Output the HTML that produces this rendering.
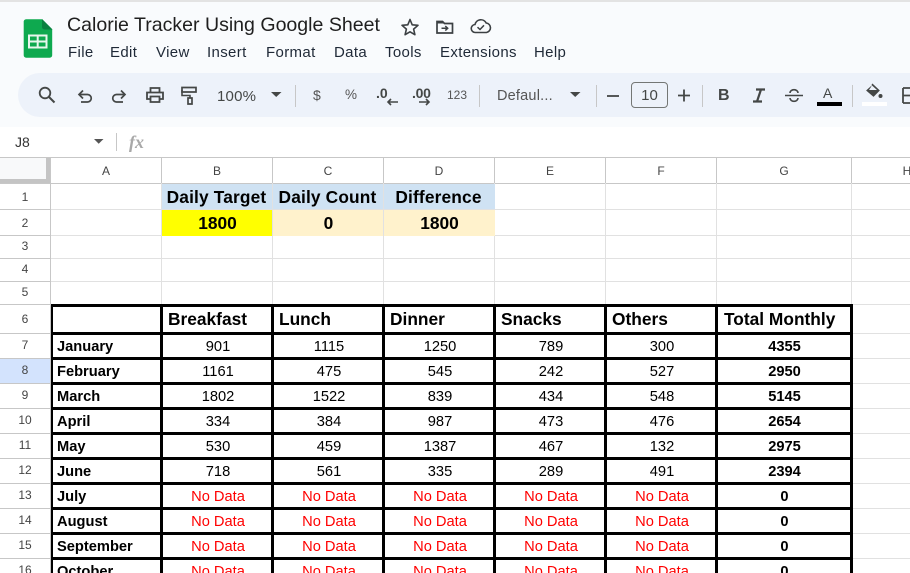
<!DOCTYPE html>
<html><head><meta charset="utf-8"><title>Calorie Tracker Using Google Sheet</title>
<style>
html,body{margin:0;padding:0;height:573px;overflow:hidden}
body{width:910px;height:573px;overflow:hidden;position:relative;background:#fff;font-family:"Liberation Sans",Arial,sans-serif;color:#000}
div{position:absolute;box-sizing:border-box}
span.t{position:absolute;white-space:nowrap;line-height:20px}
.m{top:43px;font-size:15px;color:#1f2937;letter-spacing:.35px;line-height:20px;white-space:nowrap}
.hl{background:#e1e1e1}
.hh{background:#c7c7c7}
.ch,.rh{font-size:12px;color:#444;text-align:center;line-height:20px}
.ch{top:161px;width:100px}
.rh{left:0;width:50px}
.b{background:#000}
.c{font-size:14.67px;text-align:center;line-height:20px;white-space:nowrap;margin-top:1px}
.l{font-size:14.67px;font-weight:bold;left:57px;line-height:20px;white-space:nowrap;margin-top:1px}
.h{font-size:17.33px;font-weight:bold;line-height:24px;white-space:nowrap}
.w{letter-spacing:.15px}
.B{left:163px;width:110px}.C{left:274px;width:110px}.D{left:385px;width:110px}.E{left:496px;width:110px}.F{left:607px;width:110px}.G{left:718px;width:133px;font-weight:bold}
.n{color:#f00}
.s{background:#c7c7c7;width:1px;top:85px;height:22px}
svg{position:absolute;overflow:visible}
</style></head><body>
<div style="left:0;top:0;width:910px;height:127px;background:#f9fbfd"></div>
<div style="left:0;top:0;width:910px;height:2px;background:#e3e3e3"></div>

<svg style="left:23px;top:19px" width="30" height="39" viewBox="0 0 30 39"><path d="M3 0H19L29 10V36a2.500 2.500 0 0 1-2.500 2.500H3A2.500 2.500 0 0 1 .5 36V3A2.500 2.500 0 0 1 3 0Z" fill="#0ea94f" transform="translate(.2 .2)"/><path d="M19 0L29.500 10.500H21.500a2.500 2.500 0 0 1-2.500-2.500Z" fill="#0a8040"/><path d="M6 16.500H23.500V28.500H6Z" fill="none" stroke="#e8f6ee" stroke-width="2"/><path d="M6 22.500H23.500M14.700 16.500V28.500" stroke="#e8f6ee" stroke-width="2"/></svg>

<span class="t" style="left:67px;top:15px;font-size:19.560px;color:#1f1f1f;line-height:20px">Calorie Tracker Using Google Sheet</span>
<svg style="left:400px;top:17px" width="20" height="20" viewBox="0 0 20 20"><path d="M10 2.500L12.200 7.800L18 8.300L13.600 12.100L14.900 17.700L10 14.800L5.100 17.700L6.400 12.100L2 8.300L7.800 7.800Z" fill="none" stroke="#3c4043" stroke-width="1.600" stroke-linejoin="round"/></svg>
<svg style="left:435px;top:17px" width="20" height="20" viewBox="0 0 20 20"><path d="M2 4.500H7.500L9.500 6.500H17.500V16H2Z" fill="none" stroke="#3c4043" stroke-width="1.700"/><path d="M2 4H7.500L9.500 6.500H2Z" fill="#3c4043"/><path d="M6.500 11.300H12.500M10.300 9L12.700 11.300L10.300 13.600" fill="none" stroke="#3c4043" stroke-width="1.500"/></svg>
<svg style="left:470px;top:16px" width="22" height="20" viewBox="0 0 22 20"><path d="M5.500 16.500a4 4 0 0 1-.5-8a6 6 0 0 1 11.200-1.500a4.800 4.800 0 0 1 .3 9.500Z" fill="none" stroke="#3c4043" stroke-width="1.600"/><path d="M7.500 11.200L10 13.500L14 9.300" fill="none" stroke="#3c4043" stroke-width="1.500"/></svg>

<div class="m" style="left:68px">File</div>
<div class="m" style="left:110px">Edit</div>
<div class="m" style="left:156px">View</div>
<div class="m" style="left:207px">Insert</div>
<div class="m" style="left:266px">Format</div>
<div class="m" style="left:334px">Data</div>
<div class="m" style="left:385px">Tools</div>
<div class="m" style="left:440px">Extensions</div>
<div class="m" style="left:534px">Help</div>

<div style="left:18px;top:73px;width:920px;height:44px;border-radius:22px;background:#edf2fa"></div>

<svg style="left:37px;top:85px" width="20" height="20" viewBox="0 0 20 20"><circle cx="8" cy="8" r="5.300" fill="none" stroke="#444746" stroke-width="1.800"/><path d="M12 12L17.500 17.500" stroke="#444746" stroke-width="2"/></svg>
<svg style="left:75px;top:86px" width="20" height="20" viewBox="0 0 20 20"><path d="M4 8.500H12.500a3.500 3.500 0 0 1 0 7.500H6" fill="none" stroke="#444746" stroke-width="1.700"/><path d="M8 4.500L4 8.500L8 12.500" fill="none" stroke="#444746" stroke-width="1.700"/></svg>
<svg style="left:109px;top:86px" width="20" height="20" viewBox="0 0 20 20"><path d="M16 8.500H7.500a3.500 3.500 0 0 0 0 7.500H14" fill="none" stroke="#444746" stroke-width="1.700"/><path d="M12 4.500L16 8.500L12 12.500" fill="none" stroke="#444746" stroke-width="1.700"/></svg>
<svg style="left:145px;top:85px" width="20" height="20" viewBox="0 0 20 20"><path d="M5.500 7V3H14.500V7M5.500 14H2V7.500H18V14H14.500" fill="none" stroke="#444746" stroke-width="1.800"/><path d="M5.500 11.500H14.500V17H5.500Z" fill="none" stroke="#444746" stroke-width="1.800"/></svg>
<svg style="left:180px;top:85px" width="20" height="20" viewBox="0 0 20 20"><path d="M2 2.500H16V7H2Z" fill="none" stroke="#444746" stroke-width="1.700"/><path d="M2 5V10.500H10V13" fill="none" stroke="#444746" stroke-width="1.600"/><path d="M8 13H12V19H8Z" fill="none" stroke="#444746" stroke-width="1.700"/></svg>

<span class="t" style="left:217px;top:87px;font-size:15px;color:#444746;letter-spacing:.2px">100%</span>
<svg style="left:271px;top:92px" width="12" height="6"><path d="M0 0H10.500L5.200 5Z" fill="#444746"/></svg>
<div class="s" style="left:295px"></div>
<span class="t" style="left:313px;top:85px;font-size:14px;color:#555">$</span>
<span class="t" style="left:345px;top:85px;font-size:13.500px;color:#555">%</span>
<span class="t" style="left:376px;top:83px;font-size:14px;font-weight:bold;color:#444746">.0</span>
<svg style="left:386px;top:98px" width="14" height="8"><path d="M12 4H2M5 1L2 4L5 7" fill="none" stroke="#444746" stroke-width="1.600"/></svg>
<span class="t" style="left:412px;top:83px;font-size:14px;font-weight:bold;color:#444746;letter-spacing:-.3px">.00</span>
<svg style="left:418px;top:98px" width="14" height="8"><path d="M1 4H11M8 1L11 4L8 7" fill="none" stroke="#444746" stroke-width="1.600"/></svg>
<span class="t" style="left:447px;top:85px;font-size:12px;color:#555">123</span>
<div class="s" style="left:479px"></div>
<span class="t" style="left:497px;top:86px;font-size:14.500px;color:#555;letter-spacing:.2px">Defaul...</span>
<svg style="left:570px;top:92px" width="12" height="6"><path d="M0 0H10.500L5.200 5Z" fill="#444746"/></svg>
<div class="s" style="left:596px"></div>
<svg style="left:607px;top:95px" width="13" height="2"><path d="M0 1H12" stroke="#444746" stroke-width="1.800"/></svg>
<div style="left:631px;top:82px;width:37px;height:26px;border:1px solid #747775;border-radius:4px;font-size:15px;color:#444746;text-align:center;line-height:25px">10</div>
<svg style="left:678px;top:89px" width="13" height="13"><path d="M0 6.500H12M6 .5V12.500" stroke="#444746" stroke-width="1.800"/></svg>
<div class="s" style="left:702px"></div>
<span class="t" style="left:718px;top:86px;font-size:16px;font-weight:bold;color:#444746">B</span>
<svg style="left:752px;top:88px" width="14" height="15" viewBox="0 0 14 15"><path d="M4 1.500H13M1 13.500H10M9 1.500L5 13.500" fill="none" stroke="#444746" stroke-width="2.200"/></svg>
<svg style="left:785px;top:87px" width="18" height="17" viewBox="0 0 18 17"><path d="M0 8.500H18" stroke="#444746" stroke-width="1.500"/><path d="M5 6a4 3.300 0 0 1 8 0M5 11a4 3.300 0 0 0 8 0" fill="none" stroke="#444746" stroke-width="1.600"/></svg>
<span class="t" style="left:823px;top:83px;font-size:14px;color:#444746">A</span>
<div style="left:817px;top:102px;width:25px;height:4px;background:#000"></div>
<div class="s" style="left:852px"></div>
<svg style="left:864px;top:83px" width="22" height="18" viewBox="0 0 22 18"><path d="M8 1L15 7.500L9.500 13L3 7.500L7.500 3.500" fill="#444746" stroke="#444746" stroke-width="1.200"/><path d="M5 7H13L8 2.500Z" fill="#edf2fa"/><circle cx="16.500" cy="13" r="2" fill="#444746"/></svg>
<div style="left:862px;top:102px;width:25px;height:4px;background:#fff"></div>
<svg style="left:902px;top:87px" width="12" height="18"><path d="M1 1H12M1 8.500H12M1 16H12M1 1V16" fill="none" stroke="#444746" stroke-width="1.800"/></svg>

<span class="t" style="left:15px;top:132px;font-size:14px;color:#333">J8</span>
<svg style="left:94px;top:139px" width="10" height="5"><path d="M0 0H9.500L4.700 4.800Z" fill="#555"/></svg>
<div style="left:116px;top:133px;width:1px;height:18px;background:#c7c7c7"></div>
<span class="t" style="left:129px;top:132px;font-family:'Liberation Serif',serif;font-style:italic;font-size:18px;font-weight:bold;color:#a8a8a8">fx</span>

<div style="left:0;top:157px;width:51px;height:26px;background:#f8f9fa"></div>
<div style="left:46px;top:157px;width:5px;height:26px;background:#c4c4c4"></div>
<div style="left:0;top:179px;width:51px;height:4px;background:#c4c4c4"></div>
<div style="left:0;top:157px;width:910px;height:1px;background:#c7c7c7"></div>
<div style="left:0;top:183px;width:910px;height:1px;background:#c7c7c7"></div>
<div style="left:0;top:359px;width:51px;height:24px;background:#d3e3fd"></div>

<!-- grid -->
<div class="hl" style="left:161px;top:183px;width:1px;height:121px"></div>
<div class="hl" style="left:272px;top:183px;width:1px;height:121px"></div>
<div class="hl" style="left:383px;top:183px;width:1px;height:121px"></div>
<div class="hl" style="left:494px;top:183px;width:1px;height:121px"></div>
<div class="hl" style="left:605px;top:183px;width:1px;height:121px"></div>
<div class="hl" style="left:716px;top:183px;width:1px;height:121px"></div>
<div class="hl" style="left:851px;top:183px;width:1px;height:390px"></div>
<div class="hl" style="left:51px;top:209px;width:859px;height:1px"></div>
<div class="hl" style="left:51px;top:235px;width:859px;height:1px"></div>
<div class="hl" style="left:51px;top:258px;width:859px;height:1px"></div>
<div class="hl" style="left:51px;top:281px;width:859px;height:1px"></div>
<div class="hl" style="left:852px;top:304px;width:58px;height:1px"></div>
<div class="hl" style="left:852px;top:333px;width:58px;height:1px"></div>
<div class="hl" style="left:852px;top:358px;width:58px;height:1px"></div>
<div class="hl" style="left:852px;top:383px;width:58px;height:1px"></div>
<div class="hl" style="left:852px;top:408px;width:58px;height:1px"></div>
<div class="hl" style="left:852px;top:433px;width:58px;height:1px"></div>
<div class="hl" style="left:852px;top:458px;width:58px;height:1px"></div>
<div class="hl" style="left:852px;top:483px;width:58px;height:1px"></div>
<div class="hl" style="left:852px;top:508px;width:58px;height:1px"></div>
<div class="hl" style="left:852px;top:533px;width:58px;height:1px"></div>
<div class="hl" style="left:852px;top:558px;width:58px;height:1px"></div>

<!-- header lines -->
<div class="hh" style="left:50px;top:157px;width:1px;height:416px"></div>
<div class="hh" style="left:161px;top:157px;width:1px;height:26px"></div>
<div class="hh" style="left:272px;top:157px;width:1px;height:26px"></div>
<div class="hh" style="left:383px;top:157px;width:1px;height:26px"></div>
<div class="hh" style="left:494px;top:157px;width:1px;height:26px"></div>
<div class="hh" style="left:605px;top:157px;width:1px;height:26px"></div>
<div class="hh" style="left:716px;top:157px;width:1px;height:26px"></div>
<div class="hh" style="left:851px;top:157px;width:1px;height:26px"></div>
<div class="hh" style="left:0;top:209px;width:50px;height:1px"></div>
<div class="hh" style="left:0;top:235px;width:50px;height:1px"></div>
<div class="hh" style="left:0;top:258px;width:50px;height:1px"></div>
<div class="hh" style="left:0;top:281px;width:50px;height:1px"></div>
<div class="hh" style="left:0;top:304px;width:50px;height:1px"></div>
<div class="hh" style="left:0;top:333px;width:50px;height:1px"></div>
<div class="hh" style="left:0;top:358px;width:50px;height:1px"></div>
<div class="hh" style="left:0;top:383px;width:50px;height:1px"></div>
<div class="hh" style="left:0;top:408px;width:50px;height:1px"></div>
<div class="hh" style="left:0;top:433px;width:50px;height:1px"></div>
<div class="hh" style="left:0;top:458px;width:50px;height:1px"></div>
<div class="hh" style="left:0;top:483px;width:50px;height:1px"></div>
<div class="hh" style="left:0;top:508px;width:50px;height:1px"></div>
<div class="hh" style="left:0;top:533px;width:50px;height:1px"></div>
<div class="hh" style="left:0;top:558px;width:50px;height:1px"></div>

<div class="ch" style="left:56px">A</div>
<div class="ch" style="left:167px">B</div>
<div class="ch" style="left:278px">C</div>
<div class="ch" style="left:389px">D</div>
<div class="ch" style="left:500px">E</div>
<div class="ch" style="left:611px">F</div>
<div class="ch" style="left:734px">G</div>
<div class="ch" style="left:857px">H</div>

<div class="rh" style="top:187px">1</div>
<div class="rh" style="top:213px">2</div>
<div class="rh" style="top:236px">3</div>
<div class="rh" style="top:259px">4</div>
<div class="rh" style="top:282px">5</div>
<div class="rh" style="top:309px">6</div>
<div class="rh" style="top:335px">7</div>
<div class="rh" style="top:360px">8</div>
<div class="rh" style="top:385px">9</div>
<div class="rh" style="top:410px">10</div>
<div class="rh" style="top:435px">11</div>
<div class="rh" style="top:460px">12</div>
<div class="rh" style="top:485px">13</div>
<div class="rh" style="top:510px">14</div>
<div class="rh" style="top:535px">15</div>
<div class="rh" style="top:560px">16</div>

<!-- top table -->
<div style="left:162px;top:184px;width:333px;height:25px;background:#cfe2f3"></div>
<div style="left:162px;top:210px;width:110px;height:26px;background:#ff0"></div>
<div style="left:273px;top:210px;width:222px;height:26px;background:#fff2cc"></div>
<div class="hl" style="left:272px;top:184px;width:1px;height:52px"></div>
<div class="hl" style="left:383px;top:184px;width:1px;height:52px"></div>
<div class="h w" style="left:161px;top:185px;width:111px;text-align:center">Daily Target</div>
<div class="h w" style="left:272px;top:185px;width:111px;text-align:center">Daily Count</div>
<div class="h w" style="left:383px;top:185px;width:111px;text-align:center">Difference</div>
<div class="h" style="left:162px;top:211px;width:111px;text-align:center">1800</div>
<div class="h" style="left:273px;top:211px;width:111px;text-align:center">0</div>
<div class="h" style="left:384px;top:211px;width:111px;text-align:center">1800</div>

<!-- main table lines -->
<div class="b" style="left:51px;top:304px;width:802px;height:3px"></div>
<div class="b" style="left:51px;top:332px;width:802px;height:3px"></div>
<div class="b" style="left:51px;top:357px;width:802px;height:3px"></div>
<div class="b" style="left:51px;top:382px;width:802px;height:3px"></div>
<div class="b" style="left:51px;top:407px;width:802px;height:3px"></div>
<div class="b" style="left:51px;top:432px;width:802px;height:3px"></div>
<div class="b" style="left:51px;top:457px;width:802px;height:3px"></div>
<div class="b" style="left:51px;top:482px;width:802px;height:3px"></div>
<div class="b" style="left:51px;top:507px;width:802px;height:3px"></div>
<div class="b" style="left:51px;top:532px;width:802px;height:3px"></div>
<div class="b" style="left:51px;top:557px;width:802px;height:3px"></div>
<div class="b" style="left:51px;top:304px;width:2px;height:269px"></div>
<div class="b" style="left:160px;top:304px;width:3px;height:269px"></div>
<div class="b" style="left:271px;top:304px;width:3px;height:269px"></div>
<div class="b" style="left:382px;top:304px;width:3px;height:269px"></div>
<div class="b" style="left:493px;top:304px;width:3px;height:269px"></div>
<div class="b" style="left:604px;top:304px;width:3px;height:269px"></div>
<div class="b" style="left:715px;top:304px;width:3px;height:269px"></div>
<div class="b" style="left:850px;top:304px;width:3px;height:269px"></div>

<div class="h" style="left:168px;top:307px">Breakfast</div>
<div class="h" style="left:279px;top:307px">Lunch</div>
<div class="h" style="left:390px;top:307px">Dinner</div>
<div class="h" style="left:501px;top:307px">Snacks</div>
<div class="h" style="left:612px;top:307px">Others</div>
<div class="h" style="left:724px;top:307px">Total Monthly</div>

<div class="l" style="top:336px">January</div><div class="c B" style="top:336px">901</div><div class="c C" style="top:336px">1115</div><div class="c D" style="top:336px">1250</div><div class="c E" style="top:336px">789</div><div class="c F" style="top:336px">300</div><div class="c G" style="top:336px">4355</div>
<div class="l" style="top:361px">February</div><div class="c B" style="top:361px">1161</div><div class="c C" style="top:361px">475</div><div class="c D" style="top:361px">545</div><div class="c E" style="top:361px">242</div><div class="c F" style="top:361px">527</div><div class="c G" style="top:361px">2950</div>
<div class="l" style="top:386px">March</div><div class="c B" style="top:386px">1802</div><div class="c C" style="top:386px">1522</div><div class="c D" style="top:386px">839</div><div class="c E" style="top:386px">434</div><div class="c F" style="top:386px">548</div><div class="c G" style="top:386px">5145</div>
<div class="l" style="top:411px">April</div><div class="c B" style="top:411px">334</div><div class="c C" style="top:411px">384</div><div class="c D" style="top:411px">987</div><div class="c E" style="top:411px">473</div><div class="c F" style="top:411px">476</div><div class="c G" style="top:411px">2654</div>
<div class="l" style="top:436px">May</div><div class="c B" style="top:436px">530</div><div class="c C" style="top:436px">459</div><div class="c D" style="top:436px">1387</div><div class="c E" style="top:436px">467</div><div class="c F" style="top:436px">132</div><div class="c G" style="top:436px">2975</div>
<div class="l" style="top:461px">June</div><div class="c B" style="top:461px">718</div><div class="c C" style="top:461px">561</div><div class="c D" style="top:461px">335</div><div class="c E" style="top:461px">289</div><div class="c F" style="top:461px">491</div><div class="c G" style="top:461px">2394</div>
<div class="l" style="top:486px">July</div><div class="c B n" style="top:486px">No Data</div><div class="c C n" style="top:486px">No Data</div><div class="c D n" style="top:486px">No Data</div><div class="c E n" style="top:486px">No Data</div><div class="c F n" style="top:486px">No Data</div><div class="c G" style="top:486px">0</div>
<div class="l" style="top:511px">August</div><div class="c B n" style="top:511px">No Data</div><div class="c C n" style="top:511px">No Data</div><div class="c D n" style="top:511px">No Data</div><div class="c E n" style="top:511px">No Data</div><div class="c F n" style="top:511px">No Data</div><div class="c G" style="top:511px">0</div>
<div class="l" style="top:536px">September</div><div class="c B n" style="top:536px">No Data</div><div class="c C n" style="top:536px">No Data</div><div class="c D n" style="top:536px">No Data</div><div class="c E n" style="top:536px">No Data</div><div class="c F n" style="top:536px">No Data</div><div class="c G" style="top:536px">0</div>
<div class="l" style="top:561px">October</div><div class="c B n" style="top:561px">No Data</div><div class="c C n" style="top:561px">No Data</div><div class="c D n" style="top:561px">No Data</div><div class="c E n" style="top:561px">No Data</div><div class="c F n" style="top:561px">No Data</div><div class="c G" style="top:561px">0</div>
</body></html>
